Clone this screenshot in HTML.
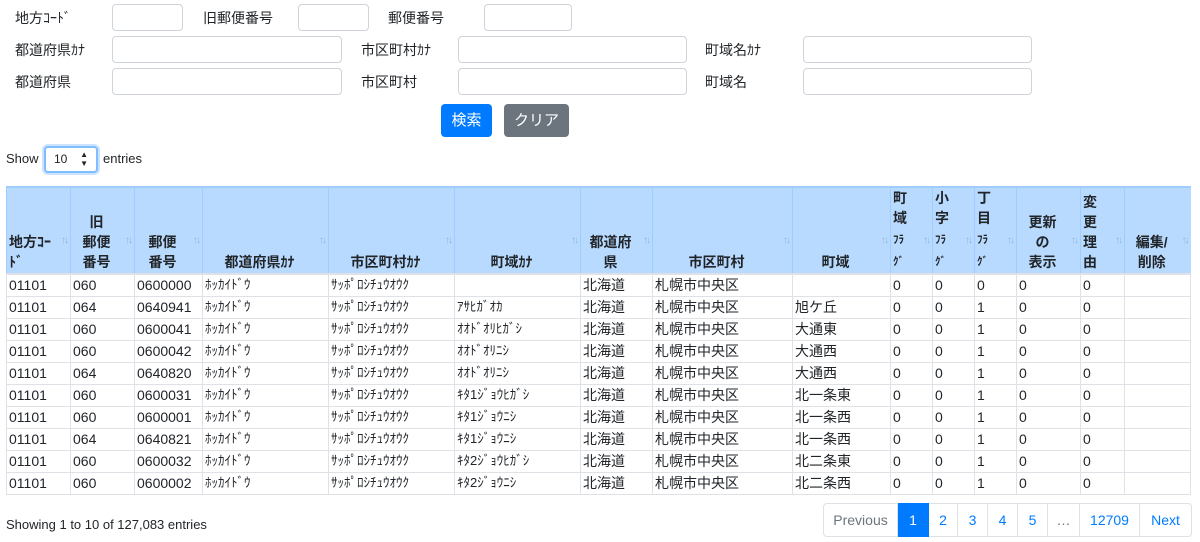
<!DOCTYPE html>
<html><head><meta charset="utf-8"><style>
*{box-sizing:border-box;margin:0;padding:0}
body{width:1200px;height:542px;background:#fff;font-family:"Liberation Sans","Noto Sans CJK JP",sans-serif;color:#212529;font-size:14px;position:relative;overflow:hidden}
.l{position:absolute;font-size:14px;line-height:20px}
.i{position:absolute;border:1px solid #ced4da;border-radius:4px;background:#fff}
.btn{position:absolute;color:#fff;border-radius:4px;font-size:15px;text-align:center;line-height:33px}
table{position:absolute;left:6px;top:186px;border-collapse:collapse;table-layout:fixed;width:1184px}
th{background:#b8daff;border-left:1px solid #9fcdff;border-top:2px solid #9fcdff;border-bottom:2px solid #dee2e6;vertical-align:bottom;text-align:center;font-weight:bold;font-size:14px;line-height:20px;height:84px;padding:0 14px 1px 2px;position:relative}
th:first-child{text-align:left}
th:after{content:"↑↓";position:absolute;right:3px;bottom:22px;font-size:10px;color:#8fb5d8;letter-spacing:-2px;font-weight:normal}
td{border:1px solid #dee2e6;height:22px;padding:0 2px;font-size:14px;line-height:20px;white-space:nowrap;overflow:hidden}
th .k{font-size:11px}
td.k{font-size:13px}
.pg{position:absolute;top:503px;height:34px;border:1px solid #dee2e6;border-left:none;color:#007bff;text-align:center;line-height:32px;font-size:14px}
</style></head><body>
<div class="l" style="left:15px;top:8px">地方ｺｰﾄﾞ</div><div class="i" style="left:112px;top:4px;width:71px;height:27px"></div>
<div class="l" style="left:203px;top:8px">旧郵便番号</div><div class="i" style="left:298px;top:4px;width:71px;height:27px"></div>
<div class="l" style="left:388px;top:8px">郵便番号</div><div class="i" style="left:484px;top:4px;width:88px;height:27px"></div>
<div class="l" style="left:15px;top:40px">都道府県ｶﾅ</div><div class="i" style="left:112px;top:36px;width:230px;height:27px"></div>
<div class="l" style="left:361px;top:40px">市区町村ｶﾅ</div><div class="i" style="left:458px;top:36px;width:229px;height:27px"></div>
<div class="l" style="left:705px;top:40px">町域名ｶﾅ</div><div class="i" style="left:803px;top:36px;width:229px;height:27px"></div>
<div class="l" style="left:15px;top:72px">都道府県</div><div class="i" style="left:112px;top:68px;width:230px;height:27px"></div>
<div class="l" style="left:361px;top:72px">市区町村</div><div class="i" style="left:458px;top:68px;width:229px;height:27px"></div>
<div class="l" style="left:705px;top:72px">町域名</div><div class="i" style="left:803px;top:68px;width:229px;height:27px"></div>
<div class="btn" style="left:441px;top:104px;width:51px;height:33px;background:#007bff">検索</div>
<div class="btn" style="left:504px;top:104px;width:65px;height:33px;background:#6c757d">クリア</div>
<div class="l" style="left:6px;top:149px;font-size:13px">Show</div>
<div class="i" style="left:44px;top:146px;width:54px;height:27px;border:2px solid #80bdff;box-shadow:0 0 0 2px #cce3ff;font-size:12px;line-height:23px;padding-left:8px">10<span style="position:absolute;right:8px;font-size:8px;line-height:11px;top:1px">▲</span><span style="position:absolute;right:8px;font-size:8px;top:10px;line-height:11px">▼</span></div>
<div class="l" style="left:103px;top:149px;font-size:13px">entries</div>
<table>
<colgroup><col style="width:64px"><col style="width:64px"><col style="width:68px"><col style="width:126px"><col style="width:126px"><col style="width:126px"><col style="width:72px"><col style="width:140px"><col style="width:98px"><col style="width:42px"><col style="width:42px"><col style="width:42px"><col style="width:64px"><col style="width:44px"><col style="width:66px"></colgroup>
<tr><th>地方ｺｰﾄﾞ</th><th>旧<br>郵便<br>番号</th><th>郵便<br>番号</th><th>都道府県ｶﾅ</th><th>市区町村ｶﾅ</th><th>町域ｶﾅ</th><th>都道府<br>県</th><th>市区町村</th><th>町域</th><th style="text-align:left">町<br>域<br><span class="k">ﾌﾗ<br>ｸﾞ</span></th><th style="text-align:left">小<br>字<br><span class="k">ﾌﾗ<br>ｸﾞ</span></th><th style="text-align:left">丁<br>目<br><span class="k">ﾌﾗ<br>ｸﾞ</span></th><th>更新<br>の<br>表示</th><th style="text-align:left">変<br>更<br>理<br>由</th><th>編集/<br>削除</th></tr>
<tr><td>01101</td><td>060</td><td>0600000</td><td class="k">ﾎｯｶｲﾄﾞｳ</td><td class="k">ｻｯﾎﾟﾛｼﾁｭｳｵｳｸ</td><td class="k"></td><td>北海道</td><td>札幌市中央区</td><td></td><td>0</td><td>0</td><td>0</td><td>0</td><td>0</td><td></td></tr>
<tr><td>01101</td><td>064</td><td>0640941</td><td class="k">ﾎｯｶｲﾄﾞｳ</td><td class="k">ｻｯﾎﾟﾛｼﾁｭｳｵｳｸ</td><td class="k">ｱｻﾋｶﾞｵｶ</td><td>北海道</td><td>札幌市中央区</td><td>旭ケ丘</td><td>0</td><td>0</td><td>1</td><td>0</td><td>0</td><td></td></tr>
<tr><td>01101</td><td>060</td><td>0600041</td><td class="k">ﾎｯｶｲﾄﾞｳ</td><td class="k">ｻｯﾎﾟﾛｼﾁｭｳｵｳｸ</td><td class="k">ｵｵﾄﾞｵﾘﾋｶﾞｼ</td><td>北海道</td><td>札幌市中央区</td><td>大通東</td><td>0</td><td>0</td><td>1</td><td>0</td><td>0</td><td></td></tr>
<tr><td>01101</td><td>060</td><td>0600042</td><td class="k">ﾎｯｶｲﾄﾞｳ</td><td class="k">ｻｯﾎﾟﾛｼﾁｭｳｵｳｸ</td><td class="k">ｵｵﾄﾞｵﾘﾆｼ</td><td>北海道</td><td>札幌市中央区</td><td>大通西</td><td>0</td><td>0</td><td>1</td><td>0</td><td>0</td><td></td></tr>
<tr><td>01101</td><td>064</td><td>0640820</td><td class="k">ﾎｯｶｲﾄﾞｳ</td><td class="k">ｻｯﾎﾟﾛｼﾁｭｳｵｳｸ</td><td class="k">ｵｵﾄﾞｵﾘﾆｼ</td><td>北海道</td><td>札幌市中央区</td><td>大通西</td><td>0</td><td>0</td><td>1</td><td>0</td><td>0</td><td></td></tr>
<tr><td>01101</td><td>060</td><td>0600031</td><td class="k">ﾎｯｶｲﾄﾞｳ</td><td class="k">ｻｯﾎﾟﾛｼﾁｭｳｵｳｸ</td><td class="k">ｷﾀ1ｼﾞｮｳﾋｶﾞｼ</td><td>北海道</td><td>札幌市中央区</td><td>北一条東</td><td>0</td><td>0</td><td>1</td><td>0</td><td>0</td><td></td></tr>
<tr><td>01101</td><td>060</td><td>0600001</td><td class="k">ﾎｯｶｲﾄﾞｳ</td><td class="k">ｻｯﾎﾟﾛｼﾁｭｳｵｳｸ</td><td class="k">ｷﾀ1ｼﾞｮｳﾆｼ</td><td>北海道</td><td>札幌市中央区</td><td>北一条西</td><td>0</td><td>0</td><td>1</td><td>0</td><td>0</td><td></td></tr>
<tr><td>01101</td><td>064</td><td>0640821</td><td class="k">ﾎｯｶｲﾄﾞｳ</td><td class="k">ｻｯﾎﾟﾛｼﾁｭｳｵｳｸ</td><td class="k">ｷﾀ1ｼﾞｮｳﾆｼ</td><td>北海道</td><td>札幌市中央区</td><td>北一条西</td><td>0</td><td>0</td><td>1</td><td>0</td><td>0</td><td></td></tr>
<tr><td>01101</td><td>060</td><td>0600032</td><td class="k">ﾎｯｶｲﾄﾞｳ</td><td class="k">ｻｯﾎﾟﾛｼﾁｭｳｵｳｸ</td><td class="k">ｷﾀ2ｼﾞｮｳﾋｶﾞｼ</td><td>北海道</td><td>札幌市中央区</td><td>北二条東</td><td>0</td><td>0</td><td>1</td><td>0</td><td>0</td><td></td></tr>
<tr><td>01101</td><td>060</td><td>0600002</td><td class="k">ﾎｯｶｲﾄﾞｳ</td><td class="k">ｻｯﾎﾟﾛｼﾁｭｳｵｳｸ</td><td class="k">ｷﾀ2ｼﾞｮｳﾆｼ</td><td>北海道</td><td>札幌市中央区</td><td>北二条西</td><td>0</td><td>0</td><td>1</td><td>0</td><td>0</td><td></td></tr>
</table>
<div class="l" style="left:6px;top:515px;font-size:13px">Showing 1 to 10 of 127,083 entries</div>
<div class="pg" style="left:823px;width:75px;border-left:1px solid #dee2e6;border-radius:4px 0 0 4px;color:#6c757d">Previous</div>
<div class="pg" style="left:898px;width:31px;background:#007bff;border-color:#007bff;color:#fff">1</div>
<div class="pg" style="left:929px;width:29px">2</div>
<div class="pg" style="left:958px;width:30px">3</div>
<div class="pg" style="left:988px;width:30px">4</div>
<div class="pg" style="left:1018px;width:30px">5</div>
<div class="pg" style="left:1048px;width:32px;color:#6c757d">…</div>
<div class="pg" style="left:1080px;width:60px">12709</div>
<div class="pg" style="left:1140px;width:52px;border-radius:0 4px 4px 0">Next</div>
</body></html>
